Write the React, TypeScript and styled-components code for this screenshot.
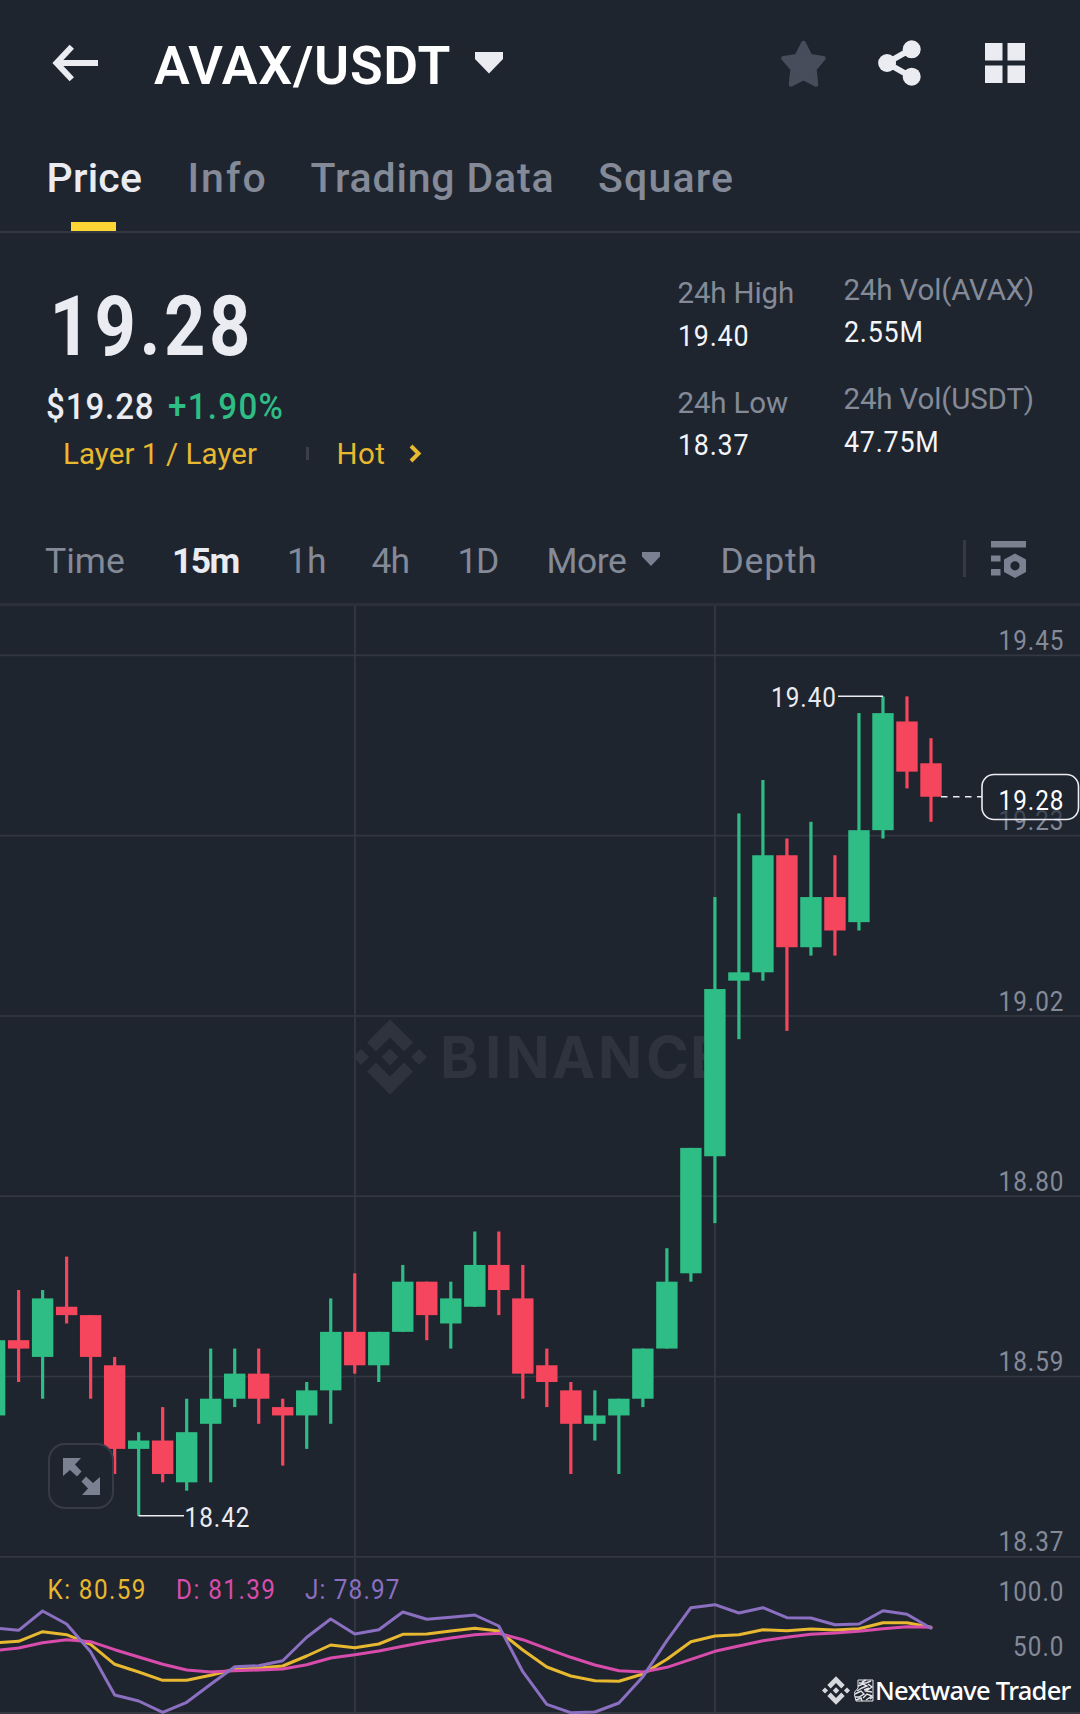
import React from "react";
import styled, { createGlobalStyle } from "styled-components";

const color = {
  bg: "#1f252f",
  line: "#333741",
  text: "#eaecf1",
  muted: "#848a97",
  icon: "#7b8190",
  up: "#2ebd85",
  down: "#f6465d",
  gold: "#e8b830",
  pink: "#d84cab",
  purple: "#8b6fc0",
  watermark: "#2f333e",
};

const GlobalStyle = createGlobalStyle`
  body {
    margin: 0;
    background: ${color.bg};
    font-family: Roboto, "Noto Sans", sans-serif;
  }
`;

const Screen = styled.main`
  display: flex;
  flex-direction: column;
  width: 1080px;
  height: 1714px;
  overflow: hidden;
  background: ${color.bg};
  color: ${color.text};
`;

/* ---------- header ---------- */

const Header = styled.header`
  display: flex;
  align-items: center;
  box-sizing: border-box;
  height: 127px;
  padding: 0 55px 1px 52px;
`;

const PairTitle = styled.h1`
  width: 321px;
  margin: 0 0 0 55px;
  padding-top: 5px;
  font-size: 53.5px;
  line-height: 64px;
  font-weight: 600;
  letter-spacing: 0.75px;
  color: #fff;
  white-space: nowrap;
`;

const HeaderActions = styled.div`
  display: flex;
  align-items: center;
  margin-left: auto;
`;

const ShareSlot = styled.span`
  display: flex;
  margin: 0 64px 0 52px;
`;

const Icon = styled.svg`
  display: block;
  flex: none;
`;

/* ---------- section tabs ---------- */

const Tabs = styled.nav`
  display: flex;
  box-sizing: border-box;
  height: 106px;
  padding-left: 46.5px;
  border-bottom: 2px solid ${color.line};
`;

const Tab = styled.a<{ $width: number; $active?: boolean; $track: number }>`
  position: relative;
  width: ${(p) => p.$width}px;
  font-size: 41px;
  line-height: 102px;
  font-weight: 500;
  letter-spacing: ${(p) => p.$track}px;
  color: ${(p) => (p.$active ? color.text : color.muted)};
  white-space: nowrap;
`;

const TabMarker = styled.span`
  position: absolute;
  left: 24.5px;
  bottom: 0;
  width: 45px;
  height: 9px;
  background: #fcd535;
`;

/* ---------- price summary ---------- */

const Summary = styled.section`
  display: grid;
  grid-template-columns: 677.5px 166px 1fr;
  height: 286px;
`;

const PriceColumn = styled.div`
  padding: 48.5px 0 0 45.5px;
`;

const LastPrice = styled.div`
  width: 240px;
  padding-left: 4px;
  font-size: 83px;
  line-height: 90px;
  font-weight: 700;
  letter-spacing: 4.1px;
  transform: scaleX(0.87);
  transform-origin: left;
`;

const ChangeRow = styled.div`
  display: flex;
  margin-top: 13px;
  font-size: 36px;
  line-height: 44px;
  font-weight: 500;
`;

const NarrowNumber = styled.span<{ $width?: number; $positive?: boolean; $track: number }>`
  display: block;
  width: ${(p) => (p.$width ? `${p.$width}px` : "auto")};
  letter-spacing: ${(p) => p.$track}px;
  color: ${(p) => (p.$positive ? color.up : "inherit")};
  transform: scaleX(0.92);
  transform-origin: left;
`;

const TagRow = styled.div`
  display: flex;
  align-items: center;
  margin-top: 5px;
  padding-left: 17.5px;
  font-size: 29.5px;
  line-height: 40px;
  color: ${color.gold};
`;

const CategoryTag = styled.span`
  width: 243px;
  letter-spacing: 0.07px;
`;

const TagDivider = styled.i`
  width: 2.5px;
  height: 13px;
  background: #3a3f4a;
`;

const HotTag = styled.span`
  width: 72px;
  margin-left: 28px;
  letter-spacing: 0.5px;
`;

const StatColumn = styled.dl<{ $top: number }>`
  margin: 0;
  padding-top: ${(p) => p.$top}px;
`;

const StatLabel = styled.dt`
  height: 40px;
  font-size: 29.5px;
  line-height: 40px;
  letter-spacing: -0.15px;
  color: ${color.muted};
  white-space: nowrap;
`;

const StatValue = styled.dd`
  height: 40px;
  margin: 2.5px 0 27.3px;
  font-size: 29.5px;
  line-height: 40px;
  font-weight: 450;
  letter-spacing: 0.85px;
  color: #f4f5f8;
  transform: scaleX(0.91);
  transform-origin: left;
`;

/* ---------- interval toolbar ---------- */

const IntervalBar = styled.nav`
  display: flex;
  align-items: center;
  box-sizing: border-box;
  height: 87px;
  padding-left: 45px;
  border-bottom: 3px solid #2b2f3a;
`;

const Interval = styled.span<{ $width: number; $active?: boolean; $track?: number }>`
  display: flex;
  align-items: center;
  width: ${(p) => p.$width}px;
  font-size: 35.5px;
  line-height: 84px;
  font-weight: ${(p) => (p.$active ? 700 : 400)};
  letter-spacing: ${(p) => p.$track ?? 0}px;
  color: ${(p) => (p.$active ? color.text : color.muted)};
`;

const MoreArrow = styled(Icon)`
  margin: -5px 0 0 16px;
`;

const BarDivider = styled.i`
  width: 2.5px;
  height: 37px;
  margin: -5px 25.5px 0 auto;
  background: #343944;
`;

const SettingsButton = styled.span`
  display: flex;
  margin: -3px 54px 0 0;
`;

/* ---------- chart ---------- */

const ChartArea = styled.section`
  position: relative;
  flex: 1;
`;

const ExpandButton = styled.button`
  position: absolute;
  left: 48px;
  top: 837px;
  display: grid;
  place-items: center;
  box-sizing: border-box;
  width: 66px;
  height: 66px;
  padding: 0;
  border: 2px solid #373b47;
  border-radius: 17px;
  background: ${color.bg};
`;

const Credit = styled.div`
  position: absolute;
  left: 822px;
  top: 1068px;
  display: flex;
  align-items: center;
  height: 32px;
  font-family: "Noto Sans", sans-serif;
  font-size: 25.5px;
  line-height: 32px;
  font-weight: 500;
  letter-spacing: -0.73px;
  color: #fff;
  white-space: nowrap;
`;

const CreditGlyph = styled(Icon)`
  margin: 1px 1px 0 4px;
`;

/* open/close span as [top, bottom], wick as [high, low] */
type Candle = [up: 0 | 1, high: number, top: number, bottom: number, low: number];

const candles: Candle[] = [
  [1, 18.63, 18.63, 18.54, 18.54],
  [0, 18.69, 18.63, 18.62, 18.58],
  [1, 18.69, 18.68, 18.61, 18.56],
  [0, 18.73, 18.67, 18.66, 18.65],
  [0, 18.66, 18.66, 18.61, 18.56],
  [0, 18.61, 18.6, 18.5, 18.47],
  [1, 18.52, 18.51, 18.5, 18.42],
  [0, 18.55, 18.51, 18.47, 18.46],
  [1, 18.56, 18.52, 18.46, 18.45],
  [1, 18.62, 18.56, 18.53, 18.46],
  [1, 18.62, 18.59, 18.56, 18.55],
  [0, 18.62, 18.59, 18.56, 18.53],
  [0, 18.56, 18.55, 18.54, 18.48],
  [1, 18.58, 18.57, 18.54, 18.5],
  [1, 18.68, 18.64, 18.57, 18.53],
  [0, 18.71, 18.64, 18.6, 18.59],
  [1, 18.64, 18.64, 18.6, 18.58],
  [1, 18.72, 18.7, 18.64, 18.64],
  [0, 18.7, 18.7, 18.66, 18.63],
  [1, 18.7, 18.68, 18.65, 18.62],
  [1, 18.76, 18.72, 18.67, 18.67],
  [0, 18.76, 18.72, 18.69, 18.66],
  [0, 18.72, 18.68, 18.59, 18.56],
  [0, 18.62, 18.6, 18.58, 18.55],
  [0, 18.58, 18.57, 18.53, 18.47],
  [1, 18.57, 18.54, 18.53, 18.51],
  [1, 18.56, 18.56, 18.54, 18.47],
  [1, 18.62, 18.62, 18.56, 18.55],
  [1, 18.74, 18.7, 18.62, 18.62],
  [1, 18.86, 18.86, 18.71, 18.7],
  [1, 19.16, 19.05, 18.85, 18.77],
  [1, 19.26, 19.07, 19.06, 18.99],
  [1, 19.3, 19.21, 19.07, 19.06],
  [0, 19.23, 19.21, 19.1, 19.0],
  [1, 19.25, 19.16, 19.1, 19.09],
  [0, 19.21, 19.16, 19.12, 19.09],
  [1, 19.38, 19.24, 19.13, 19.12],
  [1, 19.4, 19.38, 19.24, 19.23],
  [0, 19.4, 19.37, 19.31, 19.29],
  [0, 19.35, 19.32, 19.28, 19.25],
];

const STEP = 24.01;
const candleX = (i: number) => -5.4 + i * STEP;
const priceY = (p: number) => 696.4 + (19.4 - p) * 836.1;

const priceLabels = ["19.45", "19.23", "19.02", "18.80", "18.59", "18.37"];

/* KDJ curves, in thirds of a pixel below the pane top at y = 1550 */
const kdj = {
  j: [234, 241, 183, 222, 305, 435, 453, 487, 457, 403, 350, 347, 332, 262, 207, 252, 239, 186, 208, 202, 195, 228, 365, 463, 488, 486, 459, 380, 272, 173, 164, 189, 173, 203, 204, 224, 222, 182, 193, 235],
  k: [279, 274, 245, 254, 283, 343, 366, 391, 391, 376, 358, 354, 348, 318, 285, 293, 282, 253, 252, 243, 235, 243, 300, 351, 378, 392, 394, 372, 328, 275, 258, 254, 239, 242, 237, 240, 236, 218, 218, 232],
  d: [302, 294, 278, 269, 275, 299, 321, 343, 360, 366, 362, 360, 357, 344, 324, 314, 303, 289, 275, 264, 254, 250, 269, 296, 322, 345, 362, 366, 352, 328, 304, 288, 272, 262, 253, 249, 244, 236, 230, 232],
};

const curve = (values: number[]) =>
  values.map((v, i) => `${candleX(i).toFixed(1)},${(1550 + v / 3).toFixed(1)}`).join(" ");

const LabelText = styled.text<{ $color: string }>`
  fill: ${(p) => p.$color};
  font-size: 27px;
`;

const BrandText = styled.text`
  fill: ${color.watermark};
  font-family: Inter, sans-serif;
  font-size: 58px;
  font-weight: 700;
`;

const NARROW = 0.9;

/* condensed numeral label whose advance width is fixed by `width` */
function ChartLabel({ x, y, width, fill = color.muted, children }: {
  x: number;
  y: number;
  width: number;
  fill?: string;
  children: string;
}) {
  return (
    <LabelText
      $color={fill}
      transform={`translate(${x} ${y}) scale(${NARROW} 1)`}
      textLength={width / NARROW}
    >
      {children}
    </LabelText>
  );
}

function BrandMark({ fill }: { fill: string }) {
  return (
    <g fill={fill}>
      <path d="M37 0 60 23 51 32 37 18 23 32 14 23Z" />
      <path d="M37 75 60 52 51 43 37 57 23 43 14 52Z" />
      <path d="M8 29.5 16 37.5 8 45.5 0 37.5Z" />
      <path d="M37 29 45.5 37.5 37 46 28.5 37.5Z" />
      <path d="M66 29.5 74 37.5 66 45.5 58 37.5Z" />
    </g>
  );
}

function Chart() {
  return (
    <Icon width="1080" height="1108" viewBox="0 606 1080 1108">
      <g fill={color.line}>
        {priceLabels.map((label, i) => (
          <rect key={label} x="0" y={654.5 + i * 180.3} width="1080" height="1.7" />
        ))}
        <rect x="354" y="606" width="1.8" height="1107" />
        <rect x="714" y="606" width="1.8" height="1107" />
        <rect x="0" y="1712" width="1080" height="2" />
      </g>

      <g transform="translate(353 1019.5)">
        <BrandMark fill={color.watermark} />
      </g>
      <BrandText x="440 485 505.5 552 598 646 690" y="1078">
        BINANCE
      </BrandText>

      {priceLabels.map((label, i) => (
        <ChartLabel key={label} x={998.5} y={650.2 + i * 180.2} width={65}>
          {label}
        </ChartLabel>
      ))}

      {candles.map(([up, high, top, bottom, low], i) => (
        <g key={i} fill={up ? color.up : color.down}>
          <rect x={candleX(i) - 1.6} y={priceY(high)} width="3.2" height={priceY(low) - priceY(high)} />
          <rect x={candleX(i) - 10.7} y={priceY(top)} width="21.4" height={priceY(bottom) - priceY(top)} />
        </g>
      ))}

      <path d="M838 696.3H883" stroke={color.text} strokeWidth="1.6" />
      <ChartLabel x={771} y={707.3} width={65} fill={color.text}>19.40</ChartLabel>
      <path d="M138.5 1515.7H184" stroke={color.text} strokeWidth="1.6" />
      <ChartLabel x={184.5} y={1527.3} width={65} fill={color.text}>18.42</ChartLabel>

      <path d="M941 796.7H982" stroke={color.text} strokeWidth="1.6" strokeDasharray="6.5 5.5" />
      <rect
        x="982"
        y="774.5"
        width="96.5"
        height="45"
        rx="12"
        fill={color.bg}
        fillOpacity="0.65"
        stroke={color.text}
        strokeWidth="1.6"
      />
      <ChartLabel x={998.5} y={810.3} width={65} fill="#fff">19.28</ChartLabel>

      <ChartLabel x={47.5} y={1599.3} width={98} fill={color.gold}>K: 80.59</ChartLabel>
      <ChartLabel x={176} y={1599.3} width={99} fill={color.pink}>D: 81.39</ChartLabel>
      <ChartLabel x={305} y={1599.3} width={94.5} fill={color.purple}>J: 78.97</ChartLabel>
      <ChartLabel x={998.5} y={1601.3} width={65}>100.0</ChartLabel>
      <ChartLabel x={1013} y={1655.8} width={50.5}>50.0</ChartLabel>

      <g fill="none" strokeWidth="3" strokeLinejoin="round" strokeLinecap="round">
        <polyline points={curve(kdj.k)} stroke={color.gold} />
        <polyline points={curve(kdj.d)} stroke={color.pink} />
        <polyline points={curve(kdj.j)} stroke={color.purple} />
      </g>
    </Icon>
  );
}

export default function App() {
  return (
    <Screen>
      <GlobalStyle />
      <Header>
        <Icon width="47" height="38" viewBox="0 0 47 38" fill="none" stroke={color.text} strokeWidth="6">
          <path d="M19.8 2.8 4.5 19 19.8 35.2M4 19H46" />
        </Icon>
        <PairTitle>AVAX/USDT</PairTitle>
        <Icon width="28" height="22" viewBox="0 0 28 22" fill={color.text}>
          <path d="M0 0H28V7L14 21.5 0 7Z" />
        </Icon>
        <HeaderActions>
          <Icon width="45" height="47" viewBox="0 0 45 47">
            <path
              d="M22.5 3 29.3 16.2 42.5 18.2 33.4 29 35 44.5 22.5 38 10 44.5 11.6 29 2.5 18.2 15.7 16.2Z"
              fill="#474d5b"
              stroke="#474d5b"
              strokeWidth="4.5"
              strokeLinejoin="round"
            />
          </Icon>
          <ShareSlot>
            <Icon width="43" height="48" viewBox="0 0 44 48" fill={color.text}>
              <path d="M9 24 34.5 9.5M9 24 34.5 38.5" stroke={color.text} strokeWidth="6" />
              <circle cx="9.3" cy="24" r="9.2" />
              <circle cx="34.5" cy="10" r="9.2" />
              <circle cx="34.5" cy="38" r="9.2" />
            </Icon>
          </ShareSlot>
          <Icon width="40" height="40" viewBox="0 0 40 40" fill={color.text}>
            <path d="M0 0H17.5V17.5H0ZM22.5 0H40V17.5H22.5ZM0 22.5H17.5V40H0ZM22.5 22.5H40V40H22.5Z" />
          </Icon>
        </HeaderActions>
      </Header>

      <Tabs>
        <Tab $width={141} $track={0.25} $active>
          Price
          <TabMarker />
        </Tab>
        <Tab $width={123} $track={2}>Info</Tab>
        <Tab $width={287.5} $track={0.84}>Trading Data</Tab>
        <Tab $width={140} $track={1.19}>Square</Tab>
      </Tabs>

      <Summary>
        <PriceColumn>
          <LastPrice>19.28</LastPrice>
          <ChangeRow>
            <NarrowNumber $width={122} $track={0.95}>$19.28</NarrowNumber>
            <NarrowNumber $track={1.4} $positive>+1.90%</NarrowNumber>
          </ChangeRow>
          <TagRow>
            <CategoryTag>Layer 1 / Layer</CategoryTag>
            <TagDivider />
            <HotTag>Hot</HotTag>
            <Icon width="13" height="19" viewBox="0 0 13 19" fill="none" stroke={color.gold} strokeWidth="4">
              <path d="M2 2 9.5 9.5 2 17" />
            </Icon>
          </TagRow>
        </PriceColumn>
        <StatColumn $top={40}>
          <StatLabel>24h High</StatLabel>
          <StatValue>19.40</StatValue>
          <StatLabel>24h Low</StatLabel>
          <StatValue>18.37</StatValue>
        </StatColumn>
        <StatColumn $top={36.6}>
          <StatLabel>24h Vol(AVAX)</StatLabel>
          <StatValue>2.55M</StatValue>
          <StatLabel>24h Vol(USDT)</StatLabel>
          <StatValue>47.75M</StatValue>
        </StatColumn>
      </Summary>

      <IntervalBar>
        <Interval $width={127}>Time</Interval>
        <Interval $width={115} $track={-1.6} $active>15m</Interval>
        <Interval $width={84.5}>1h</Interval>
        <Interval $width={86} $track={-0.9}>4h</Interval>
        <Interval $width={89} $track={-1.4}>1D</Interval>
        <Interval $width={174} $track={-0.5}>
          More
          <MoreArrow width="18" height="14" viewBox="0 0 18 14" fill={color.icon}>
            <path d="M0 0H18V4.5L9 14 0 4.5Z" />
          </MoreArrow>
        </Interval>
        <Interval $width={110} $track={0.8}>Depth</Interval>
        <BarDivider />
        <SettingsButton>
          <Icon width="35" height="37" viewBox="0 0 35 37" fill={color.icon}>
            <path d="M0 0H35V6.5H0ZM0 14.5H9.5V20.5H0ZM0 28H9.5V34.5H0Z" />
            <path
              fillRule="evenodd"
              d="M24 12.5 35 18.5V31L24 37 13 31V18.5ZM24 20.2a4.6 4.6 0 1 0 0 9.2 4.6 4.6 0 0 0 0-9.2Z"
            />
          </Icon>
        </SettingsButton>
      </IntervalBar>

      <ChartArea>
        <Chart />
        <ExpandButton aria-label="Expand chart">
          <Icon width="37" height="37" viewBox="0 0 37 37" fill={color.icon}>
            <path d="M0 0H18L12 6.5 18.5 13.5 14 18.5 7 12 0 18Z" />
            <path d="M37 37H19L25 30.5 18.5 23.5 23 18.5 30 25 37 19Z" />
          </Icon>
        </ExpandButton>
        <Credit>
          <Icon width="28" height="29" viewBox="0 0 74 75">
            <BrandMark fill="#d5d8dd" />
          </Icon>
          <CreditGlyph width="20" height="23" viewBox="0 0 20 23" fill="none" stroke="#e4e6ea" strokeWidth="1.4">
            <path d="M4 1H19V22H2L0 14 4 9Z" strokeWidth="1" />
            <path d="M5 4H12L17 2M4 7 9 5 13 7 8 9 3 12M14 5 18 8 12 12 18 13M1 15 7 12 10 15 5 18H1M9 19 13 15 18 17 12 21M2 21 7 19 8 22M15 9 10 11M16 20 19 18M12 1 8 3" />
          </CreditGlyph>
          Nextwave Trader
        </Credit>
      </ChartArea>
    </Screen>
  );
}
